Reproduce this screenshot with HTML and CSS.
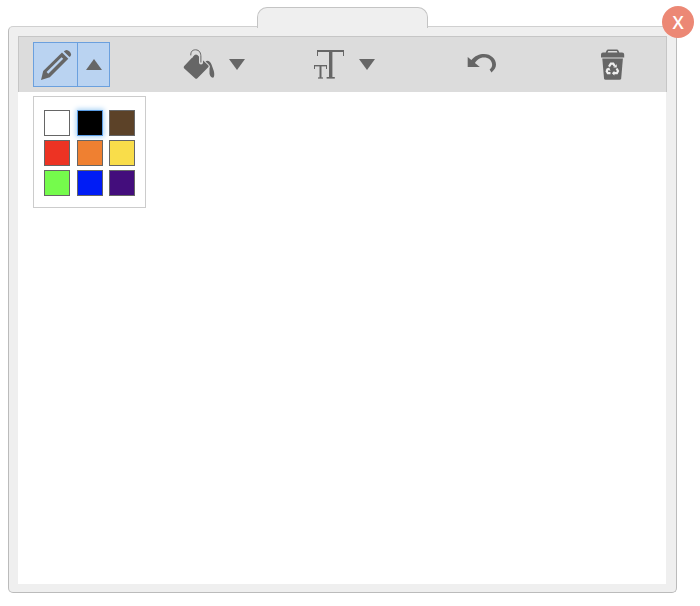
FILE: index.html
```html
<!DOCTYPE html>
<html lang="en">
<head>
<meta charset="utf-8">
<meta name="viewport" content="width=device-width, initial-scale=1">
<title>Sketch pad</title>
<link rel="stylesheet" href="styles.css">
</head>
<body>
<div class="tab"></div>
<main class="panel">
  <button class="close" type="button" aria-label="Close">X</button>
  <div class="toolbar" role="toolbar" aria-label="Drawing tools">
    <div class="tool active">
      <button class="pick" type="button" aria-label="Pencil">
        <svg class="icon" viewBox="39 48 33 33" aria-hidden="true">
          <path d="M41 80 43.2 71 62 52.6 68.3 58.8 49.8 77.3Z"/>
          <path class="slot" d="M47.4 72.8 62.4 58"/>
          <path d="M63.8 51.5Q66.4 48.4 69.6 51.5 72.6 54.6 69.5 57.1Z"/>
        </svg>
      </button>
      <button class="more" type="button" aria-label="Pencil colours" aria-expanded="true">
        <svg class="arrow" viewBox="0 0 16 11" aria-hidden="true"><path d="M0 11 8 0 16 11Z"/></svg>
      </button>
      <div class="palette">
        <button class="swatch white" type="button" aria-label="White"></button>
        <button class="swatch black selected" type="button" aria-label="Black"></button>
        <button class="swatch brown" type="button" aria-label="Brown"></button>
        <button class="swatch red" type="button" aria-label="Red"></button>
        <button class="swatch orange" type="button" aria-label="Orange"></button>
        <button class="swatch yellow" type="button" aria-label="Yellow"></button>
        <button class="swatch green" type="button" aria-label="Green"></button>
        <button class="swatch blue" type="button" aria-label="Blue"></button>
        <button class="swatch purple" type="button" aria-label="Purple"></button>
      </div>
    </div>
    <div class="tool">
      <button class="pick" type="button" aria-label="Fill">
        <svg class="icon" viewBox="182 48 33 33" aria-hidden="true">
          <path d="M184 66.2 194.6 55Q196 54 197.4 55L208.4 65.4Q209 66.4 208.2 67.2L197.4 78.2Q196.2 79.4 195 78.2L184 68.2Q183.4 67.2 184 66.2Z"/>
          <path class="halo" d="M191 56C190.6 51 193 49.8 195.6 49.8 199.6 50 201 53 201 57V62.5"/>
          <path class="line" d="M190.8 55.4C190.6 51 193 49.8 195.6 49.8 199.6 50 200.9 53 200.9 57V62.5"/>
          <path d="M205.5 61.6C207.4 59.8 210.3 61.3 211.6 64.8L213.8 71C214.6 74 214.4 76.8 213.2 77.7 211.6 77.6 210 76.4 209.5 73.7V68.2C210.7 66.4 209.7 65.1 205.5 61.6Z"/>
        </svg>
      </button>
      <button class="more" type="button" aria-label="Fill colours">
        <svg class="arrow" viewBox="0 0 16 11" aria-hidden="true"><path d="M0 0H16L8 11Z"/></svg>
      </button>
    </div>
    <div class="tool">
      <button class="pick" type="button" aria-label="Text">
        <svg class="icon" viewBox="312 48 33 33" aria-hidden="true">
          <rect x="317" y="50" width="27" height="2"/>
          <rect x="317" y="51" width="1" height="5"/>
          <rect x="343" y="51" width="1" height="5"/>
          <rect x="329" y="51" width="3.4" height="27"/>
          <rect x="326.6" y="77" width="8.2" height="1.6"/>
          <rect x="314" y="65" width="13" height="1.4"/>
          <rect x="314" y="66" width="1" height="3"/>
          <rect x="326" y="66" width="1" height="3"/>
          <rect x="319.5" y="66" width="2" height="12"/>
          <rect x="318" y="77.4" width="5" height="1.2"/>
        </svg>
      </button>
      <button class="more" type="button" aria-label="Text sizes">
        <svg class="arrow" viewBox="0 0 16 11" aria-hidden="true"><path d="M0 0H16L8 11Z"/></svg>
      </button>
    </div>
    <div class="tool">
      <button class="pick" type="button" aria-label="Undo">
        <svg class="icon" viewBox="465 48 33 33" aria-hidden="true">
          <path d="M467.7 57 479.8 67H467.7Z"/>
          <path d="M470.7 60.8C475 55.5 479.5 54 484 54 491 54 496 59 496 64.6 496 67.6 494.3 70.2 491.5 72.4L489.6 69.6C491.8 67.8 492.2 66.4 492.1 64.2 491.7 60 488.4 57.4 484 57.4 479.5 57.4 476.6 59.8 474.4 64Z"/>
        </svg>
      </button>
    </div>
    <div class="tool">
      <button class="pick" type="button" aria-label="Clear drawing">
        <svg class="icon" viewBox="596 48 33 33" aria-hidden="true">
          <path d="M601 57.5V54.5Q601 52.6 603 52.6H605.7L606.6 50.4Q607 49.4 608.2 49.4H616.8Q618 49.4 618.4 50.4L619.3 52.6H622Q624.2 52.6 624.2 54.5V57.5ZM607.6 52.6H617.4L616.8 51H608.2Z" fill-rule="evenodd"/>
          <path d="M602.3 58.6H622.9L621.2 78.2Q621 79.7 619.5 79.7H605.7Q604.2 79.7 604 78.2Z"/>
          <g class="recycle">
            <path d="M609 66.6 610.9 63.6H613.2L614.8 66.2M616.6 68.4 618 71 616.9 73.2H613.8M610.5 73.2H607.8L606.7 71.2 608 68.8"/>
            <path d="M613.3 67.5 616.8 67.6 616.7 64.2ZM614.4 70.8V75.6L611.9 73.2ZM605.6 69.2 609.2 67.4 610.5 70.8Z" class="tips"/>
          </g>
        </svg>
      </button>
    </div>
  </div>
  <div class="canvas"></div>
</main>
</body>
</html>
```

FILE: styles.css
```css
* {
  box-sizing: border-box;
}

body {
  display: flex;
  flex-direction: column;
  min-height: 100vh;
  margin: 0;
  padding: 7px 23px 13px 8px;
  background: #fff;
  font-family: "Open Sans", sans-serif;
}

button {
  margin: 0;
  padding: 0;
  border: 0;
  background: none;
  cursor: pointer;
}

.tab {
  z-index: 1;
  align-self: center;
  width: 171px;
  height: 21px;
  margin-bottom: -2px;
  border: 1px solid #c4c4c4;
  border-bottom: 0;
  border-radius: 10px 10px 0 0;
  background: #efefef;
}

.panel {
  position: relative;
  display: flex;
  flex: 1;
  flex-direction: column;
  padding: 9px 9px 8px;
  border: 1px solid #bbb;
  border-top-color: #d0d0d0;
  border-radius: 5px;
  background: #efefef;
}

.close {
  position: absolute;
  top: -21px;
  right: -18px;
  z-index: 2;
  width: 32px;
  height: 32px;
  border-radius: 50%;
  background: #ec8875;
  color: #fff;
  font: 600 18px/32px "Open Sans", sans-serif;
}

.toolbar {
  display: grid;
  grid-template-columns: 143fr 130fr 153fr 131fr 45px;
  padding: 5px 31px 5px 14px;
  border: 1px solid #c6c6c6;
  border-bottom: 0;
  background: #dcdcdc;
}

.canvas {
  flex: 1;
  margin-right: 1px;
  background: #fff;
}

.tool {
  position: relative;
  display: flex;
  justify-self: start;
}

.pick,
.more {
  display: flex;
  align-items: center;
  justify-content: center;
  height: 45px;
  border: 1px solid transparent;
}

.pick {
  width: 45px;
}

.more {
  width: 33px;
  margin-left: -1px;
}

.active .pick,
.active .more {
  border-color: #6ba0de;
  background: #bad3f1;
}

.icon,
.arrow {
  display: block;
  flex: none;
  fill: #666;
}

.icon {
  width: 33px;
  height: 33px;
}

.arrow {
  width: 16px;
  height: 11px;
}

.slot {
  fill: none;
  stroke: #bad3f1;
  stroke-width: 2.4;
}

.halo {
  fill: none;
  stroke: #dcdcdc;
  stroke-width: 4;
  stroke-linecap: round;
}

.line {
  fill: none;
  stroke: #666;
  stroke-width: 1;
}

.recycle {
  fill: none;
  stroke: #eee;
  stroke-width: 2.2;
}

.tips {
  fill: #eee;
  stroke: none;
}

.palette {
  position: absolute;
  top: 54px;
  left: 0;
  display: grid;
  grid-template-columns: repeat(3, 26px);
  justify-content: space-between;
  row-gap: 4px;
  width: 113px;
  padding: 13px 10px 11px;
  border: 1px solid #ccc;
  background: #fff;
}

.swatch {
  height: 26px;
  border: 1px solid #666;
}

.selected {
  border-color: #5b9de5;
  box-shadow: 0 0 5px 1px #a9d2f5;
}

.white { background: #fff; }
.black { background: #000; }
.brown { background: #5c4228; }
.red { background: #ed3323; }
.orange { background: #ef8031; }
.yellow { background: #f9dd4a; }
.green { background: #75fb4c; }
.blue { background: #001cf5; }
.purple { background: #430d7c; }
```
